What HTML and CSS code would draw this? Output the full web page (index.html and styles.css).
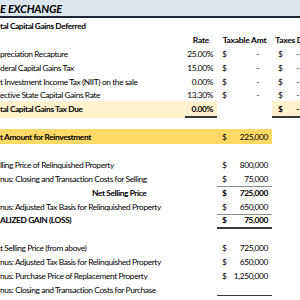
FILE: index.html
```html
<!DOCTYPE html>
<html>
<head>
<meta charset="utf-8">
<link rel="stylesheet" href="styles.css">
</head>
<body>
<div class="sheet">
  <div class="title">E EXCHANGE</div>

  <div class="row">
    <div class="lab b">tal Capital Gains Deferred</div><div class="rate"></div><div class="amt"></div><div class="tax"></div>
  </div>
  <div class="row">
    <div class="lab"></div><div class="hd">Rate</div><div class="hd">Taxable Amt</div><div class="hd">Taxes Due</div>
  </div>
  <div class="row">
    <div class="lab">preciation Recapture</div><div class="rate">25.00%</div>
    <div class="amt"><span>$</span><span class="dash">-</span></div>
    <div class="tax"><span>$</span><span class="dash">-</span></div>
  </div>
  <div class="row">
    <div class="lab">deral Capital Gains Tax</div><div class="rate">15.00%</div>
    <div class="amt"><span>$</span><span class="dash">-</span></div>
    <div class="tax"><span>$</span><span class="dash">-</span></div>
  </div>
  <div class="row">
    <div class="lab">t Investment Income Tax (NIIT) on the sale</div><div class="rate">0.00%</div>
    <div class="amt"><span>$</span><span class="dash">-</span></div>
    <div class="tax"><span>$</span><span class="dash">-</span></div>
  </div>
  <div class="row">
    <div class="lab">ective State Capital Gains Rate</div><div class="rate line">13.30%</div>
    <div class="amt"><span>$</span><span class="dash">-</span></div>
    <div class="tax line"><span>$</span><span class="dash">-</span></div>
  </div>
  <div class="row b">
    <div class="lab cream">tal Capital Gains Tax Due</div><div class="rate cream dbl">0.00%</div>
    <div class="amt"></div>
    <div class="tax cream dbl"><span>$</span><span class="dash">-</span></div>
  </div>
  <div class="row"></div>
  <div class="row">
    <div class="lab gold b">t Amount for Reinvestment</div><div class="rate gold"></div>
    <div class="amt gold"><span>$</span><span>225,000</span></div>
    <div class="tax"></div>
  </div>
  <div class="row"></div>
  <div class="row">
    <div class="lab">lling Price of Relinquished Property</div><div class="rate"></div>
    <div class="amt"><span>$</span><span>800,000</span></div><div class="tax"></div>
  </div>
  <div class="row">
    <div class="lab">nus: Closing and Transaction Costs for Selling</div><div class="rate"></div>
    <div class="amt thin"><span>$</span><span>75,000</span></div><div class="tax"></div>
  </div>
  <div class="row b">
    <div class="lab sub">Net Selling Price</div><div class="rate"></div>
    <div class="amt"><span>$</span><span>725,000</span></div><div class="tax"></div>
  </div>
  <div class="row">
    <div class="lab">nus: Adjusted Tax Basis for Relinquished Property</div><div class="rate"></div>
    <div class="amt thin"><span>$</span><span>650,000</span></div><div class="tax"></div>
  </div>
  <div class="row b">
    <div class="lab">ALIZED GAIN (LOSS)</div><div class="rate"></div>
    <div class="amt dbl"><span>$</span><span>75,000</span></div><div class="tax"></div>
  </div>
  <div class="row"></div>
  <div class="row">
    <div class="lab">t Selling Price (from above)</div><div class="rate"></div>
    <div class="amt"><span>$</span><span>725,000</span></div><div class="tax"></div>
  </div>
  <div class="row">
    <div class="lab">nus: Adjusted Tax Basis for Relinquished Property</div><div class="rate"></div>
    <div class="amt"><span>$</span><span>650,000</span></div><div class="tax"></div>
  </div>
  <div class="row">
    <div class="lab">nus: Purchase Price of Replacement Property</div><div class="rate"></div>
    <div class="amt"><span>$</span><span>1,250,000</span></div><div class="tax"></div>
  </div>
  <div class="row">
    <div class="lab">nus: Closing and Transaction Costs for Purchase</div><div class="rate"></div>
    <div class="amt dbl"></div><div class="tax"></div>
  </div>
</div>
</body>
</html>
```

FILE: styles.css
```css
html, body {
  margin: 0;
  padding: 0;
  background: #ffffff;
  overflow: hidden;
}
body {
  font-family: Lato, "Open Sans", sans-serif;
  font-size: 8.4px;
  letter-spacing: -0.4px;
  color: #000000;
}
.sheet {
  width: 340px;
}
.title {
  height: 18px;
  box-sizing: border-box;
  background: #dce6f1;
  border-bottom: 2px solid #1e2535;
  font-size: 11px;
  letter-spacing: -0.2px;
  font-weight: 700;
  font-style: italic;
  line-height: 17px;
  white-space: nowrap;
}
.row {
  display: grid;
  grid-template-columns: 185px 32px 55px 43px;
  height: 13.9px;
  line-height: 14px;
}
.row > div {
  box-sizing: border-box;
  white-space: nowrap;
  padding-top: 1px;
  min-width: 0;
}
.b { font-weight: 700; }
.lab { padding-left: 0; }
.sub { padding-left: 92px; }
.rate { text-align: right; padding-right: 4px; }
.hd { text-align: center; font-weight: 700; letter-spacing: -0.2px; }
.amt, .tax {
  display: flex;
  justify-content: space-between;
  padding-left: 5px;
  padding-right: 4px;
}
.tax { padding-left: 6px; }
.amt .dash { padding-right: 9px; }
.tax .dash { padding-right: 12px; }
.cream { background: #fff2cc; }
.gold { background: #ffd966; }
.line { border-bottom: 1px solid #5a5a5a; }
.thin { border-bottom: 1px solid #8c8c8c; }
.dbl { border-bottom: 2px solid #3a3a3a; }
```
